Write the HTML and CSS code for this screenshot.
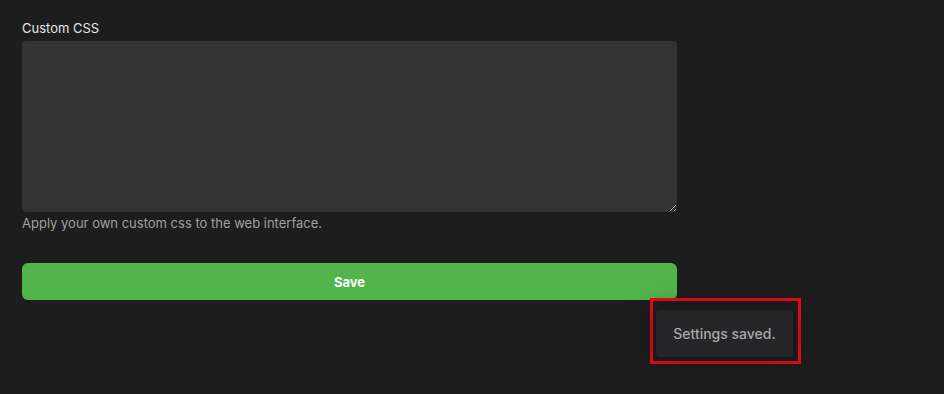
FILE: index.html
```html
<!DOCTYPE html>
<html>
<head>
<meta charset="utf-8">
<link rel="stylesheet" href="styles.css">
</head>
<body>
<div class="page">
  <div class="field">
    <label class="label">Custom CSS</label>
    <textarea class="textarea"></textarea>
    <div class="help">Apply your own custom css to the web interface.</div>
  </div>
  <button class="save">Save</button>
</div>
<div class="highlight">
  <div class="toast">Settings saved.</div>
</div>
</body>
</html>
```
FILE: styles.css
```css
html, body {
  margin: 0;
  padding: 0;
  background: #1d1d1d;
  width: 944px;
  height: 394px;
  overflow: hidden;
  font-family: Inter, "Noto Sans", sans-serif;
}
.page {
  padding: 20px 0 0 22px;
  width: 655px;
}
.field {
  display: flex;
  flex-direction: column;
}
.label {
  color: #e6e6e6;
  font-size: 13px;
  line-height: 16px;
  margin-bottom: 5px;
}
.textarea {
  box-sizing: border-box;
  width: 655px;
  height: 171px;
  background: #333333;
  border: none;
  border-radius: 4px;
  margin: 0;
  padding: 6px;
  color: #ddd;
  resize: vertical;
  outline: none;
}
.help {
  color: #a0a0a0;
  font-size: 13px;
  line-height: 16px;
  margin-top: 3px;
}
.save {
  display: block;
  margin-top: 32px;
  width: 655px;
  height: 37px;
  background: #52b54b;
  border: none;
  border-radius: 6px;
  color: #fff;
  font-family: Inter, "Noto Sans", sans-serif;
  font-weight: 700;
  font-size: 13px;
  padding: 0;
}
.highlight {
  position: absolute;
  left: 650px;
  top: 298px;
  width: 145px;
  height: 60px;
  border: 3px solid #ee0a17;
  box-sizing: content-box;
}
.toast {
  position: absolute;
  left: 3px;
  top: 9px;
  width: 137px;
  height: 47px;
  box-sizing: border-box;
  background: #252527;
  border-radius: 4px;
  box-shadow: 0 0 24px 6px rgba(0,0,0,0.25);
  color: #a8a8a8;
  font-size: 14px;
  font-weight: 500;
  display: flex;
  align-items: center;
  justify-content: center;
}
```
